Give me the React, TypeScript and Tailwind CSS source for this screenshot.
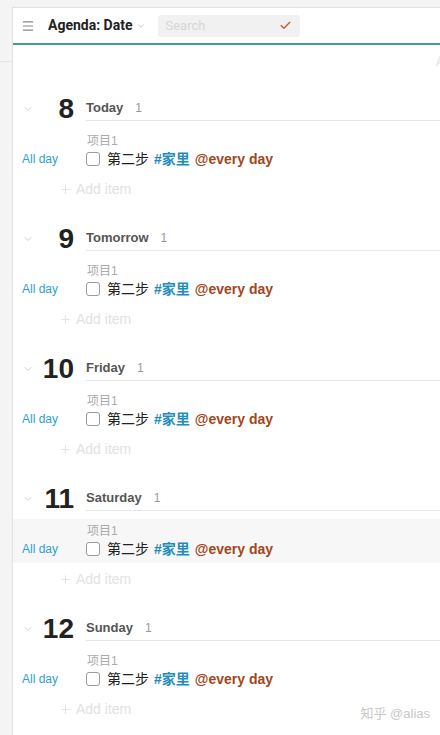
import { Menu, ChevronDown, Check, Plus } from "lucide-react";

const days = [
  { num: "8", name: "Today" },
  { num: "9", name: "Tomorrow" },
  { num: "10", name: "Friday" },
  { num: "11", name: "Saturday", hover: true },
  { num: "12", name: "Sunday" },
];

function DaySection({ num, name, hover }: { num: string; name: string; hover?: boolean }) {
  return (
    <div className="h-[130px]">
      <div className="flex h-[26px] items-center">
        <ChevronDown className="ml-[9px] h-[12px] w-[12px] text-[#d0d0d0]" strokeWidth={2} />
        <div className="w-[40px] text-right text-[28px] font-bold leading-none text-[#222]">{num}</div>
        <div className="ml-[12px] flex h-[25px] flex-1 items-center self-start border-b border-[#e6e6e6]">
          <span className="text-[13px] font-bold text-[#555]">{name}</span>
          <span className="ml-[12px] text-[12px] text-[#999]">1</span>
        </div>
      </div>
      <div className={`mt-[7px] py-[4px] ${hover ? "bg-[#f7f7f7]" : ""}`}>
        <div className="ml-[74px] h-[16px] text-[12px] leading-[16px] text-[#aaa]">项目1</div>
        <div className="flex h-[20px] items-center">
          <span className="ml-[9px] w-[64px] text-[12px] text-[#2c9fd0]">All day</span>
          <span className="h-[14px] w-[14px] rounded-[3px] border border-[#9a9a9a] bg-white"></span>
          <span className="ml-[7px] text-[14px] text-[#222]">第二步</span>
          <span className="ml-[5px] text-[14px] font-bold text-[#1e8cbc]">#家里</span>
          <span className="ml-[5px] text-[14px] font-bold text-[#a2461b]">@every day</span>
        </div>
      </div>
      <div className="mt-[6px] flex h-[20px] items-center pl-[46px] text-[14px] text-[#e2e2e2]">
        <Plus className="h-[13px] w-[13px]" strokeWidth={2} />
        <span className="ml-[4px]">Add item</span>
      </div>
    </div>
  );
}

export default function App() {
  return (
    <div
      className="relative flex h-[735px] w-[440px] overflow-hidden bg-[#f4f4f4]"
      style={{ fontFamily: '"Liberation Sans", "Noto Sans CJK SC", sans-serif' }}
    >
      <div className="w-[12px] shrink-0">
        <div className="mt-[61px] h-px bg-[#e4e4e4]"></div>
      </div>
      <div className="mt-[7px] flex-1 border-l border-t border-[#e2e2e2] bg-white">
        <div className="flex h-[37px] items-center border-b-2 border-[#3d9c9c]">
          <Menu className="ml-[8px] h-[14px] w-[14px] text-[#888]" strokeWidth={2} />
          <span
            className="ml-[13px] text-[14px] font-bold text-[#222]"
            style={{ fontFamily: "Roboto, sans-serif" }}
          >
            Agenda: Date
          </span>
          <ChevronDown className="ml-[3px] h-[10px] w-[10px] text-[#bbb]" strokeWidth={2} />
          <div className="ml-[12px] flex h-[22px] w-[142px] items-center rounded-[3px] bg-[#f1f1f1] px-[8px]">
            <span className="flex-1 text-[13px] text-[#d6d6d6]" style={{ fontFamily: "Roboto, sans-serif" }}>
              Search
            </span>
            <Check className="h-[13px] w-[13px] text-[#c45a34]" strokeWidth={2.5} />
          </div>
        </div>
        <div className="flex h-[17px] justify-end">
          <span className="mr-[-5px] mt-[9px] text-[14px] leading-none text-[#e4e4e4]">A</span>
        </div>
        <div className="pt-[34px]">
          {days.map((d) => (
            <DaySection key={d.num} {...d} />
          ))}
        </div>
      </div>
      <div className="absolute bottom-[12px] right-[10px] text-[13px] text-[#c8c8c8]">知乎 @alias</div>
    </div>
  );
}
